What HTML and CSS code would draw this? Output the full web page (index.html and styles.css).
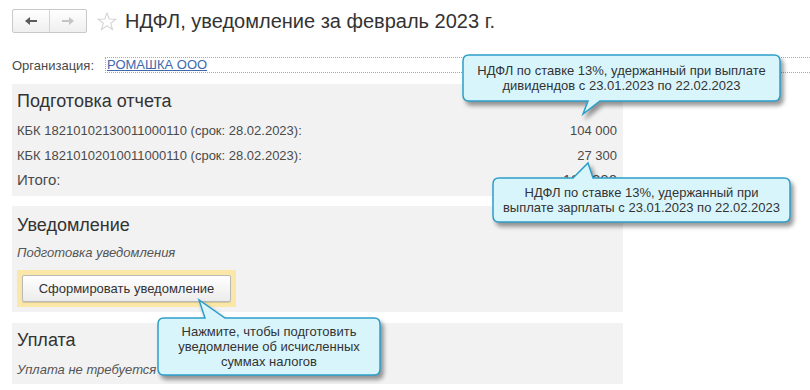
FILE: index.html
```html
<!DOCTYPE html>
<html lang="ru">
<head>
  <meta charset="UTF-8" />
  <title>НДФЛ, уведомление за февраль 2023 г.</title>
  <link rel="stylesheet" href="styles.css">
</head>
<body>

  <!-- HEADER -->
  <header class="top">
    <div class="nav">
      <span class="nav-btn">
        <svg width="12" height="8" viewBox="0 0 12 8"><path d="M0 4 L5 0 V3 H12 V5 H5 V8 Z" fill="#5a5a5a"/></svg>
      </span>
      <span class="nav-btn">
        <svg width="12" height="8" viewBox="0 0 12 8"><path d="M12 4 L7 0 V3 H0 V5 H7 V8 Z" fill="#c4c4c4"/></svg>
      </span>
    </div>
    <svg class="star" width="20" height="19" viewBox="0 0 19 18">
      <path d="M9.5 1 L11.7 6.6 L17.8 6.9 L13 10.7 L14.7 16.6 L9.5 13.2 L4.3 16.6 L6 10.7 L1.2 6.9 L7.3 6.6 Z" fill="none" stroke="#d2d2d2" stroke-width="1"/>
    </svg>
    <h1>НДФЛ, уведомление за февраль 2023 г.</h1>
  </header>

  <div class="org">
    <span class="org-label">Организация:</span>
    <div class="org-field"><a href="#">РОМАШКА ООО</a></div>
  </div>

  <!-- Подготовка отчета -->
  <section class="panel report">
    <h2>Подготовка отчета</h2>
    <div class="row"><span>КБК 18210102130011000110 (срок: 28.02.2023):</span><span>104 000</span></div>
    <div class="row"><span>КБК 18210102010011000110 (срок: 28.02.2023):</span><span>27 300</span></div>
    <div class="row total"><span>Итого:</span><span>131 300</span></div>
  </section>

  <!-- Уведомление -->
  <section class="panel notice">
    <h2>Уведомление</h2>
    <p class="note">Подготовка уведомления</p>
    <div class="highlight">
      <button class="btn">Сформировать уведомление</button>
    </div>
  </section>

  <!-- Уплата -->
  <section class="panel pay">
    <h2>Уплата</h2>
    <p class="note">Уплата не требуется</p>
  </section>

  <!-- callouts -->
  <div class="tip tip-div">
    <svg class="tip-shape" width="317" height="46">
      <path d="M6 0 H311 Q317 0 317 6 V40 Q317 46 311 46 H137 L120 59 L125 46 H6 Q0 46 0 40 V6 Q0 0 6 0 Z"/>
    </svg>
    <div class="tip-text">НДФЛ по ставке 13%, удержанный при выплате<br>дивидендов с 23.01.2023 по 22.02.2023</div>
  </div>

  <div class="tip tip-sal">
    <svg class="tip-shape" width="297" height="44">
      <path d="M6 0 H80 L95 -15 L100 0 H291 Q297 0 297 6 V38 Q297 44 291 44 H6 Q0 44 0 38 V6 Q0 0 6 0 Z"/>
    </svg>
    <div class="tip-text">НДФЛ по ставке 13%, удержанный при<br>выплате зарплаты с 23.01.2023 по 22.02.2023</div>
  </div>

  <div class="tip tip-btn">
    <svg class="tip-shape" width="222" height="57">
      <path d="M6 0 H47 L41 -18 L67 0 H216 Q222 0 222 6 V51 Q222 57 216 57 H6 Q0 57 0 51 V6 Q0 0 6 0 Z"/>
    </svg>
    <div class="tip-text">Нажмите, чтобы подготовить<br>уведомление об исчисленных<br>суммах налогов</div>
  </div>

</body>
</html>
```

FILE: styles.css
```css
body {
  font-family: 'Liberation Sans', Arial, sans-serif;
  margin: 0;
  padding: 0;
  background-color: #fff;
  color: #333;
  position: relative;
  width: 810px;
  height: 390px;
  overflow: hidden;
}

.top {
  display: flex;
  align-items: center;
  padding: 9px 12px 0;
  height: 24px;
}

.nav {
  display: flex;
  height: 22px;
  border: 1px solid #c9c9c9;
  border-radius: 2px;
  background: linear-gradient(#ffffff, #efefef);
}

.nav-btn {
  width: 36px;
  display: flex;
  align-items: center;
  justify-content: center;
}

.nav-btn + .nav-btn {
  border-left: 1px solid #d4d4d4;
}

.star {
  margin-left: 10px;
  margin-top: 1px;
}

.top h1 {
  margin: 0 0 0 8px;
  font-size: 20px;
  font-weight: normal;
  color: #333;
  line-height: 24px;
}

.org {
  display: flex;
  align-items: center;
  margin-top: 24px;
  padding-left: 12px;
  font-size: 13px;
}

.org-label {
  width: 93px;
  color: #4a4a4a;
}

.org-field {
  flex: 1;
  height: 14px;
  line-height: 14px;
  border: 1px dotted #a8a8a8;
  border-right: none;
  padding-left: 1px;
}

.org-field a {
  color: #3d68b0;
  text-decoration: underline;
}

.panel {
  background: #f2f2f2;
  margin-left: 12px;
  width: 600px;
  padding: 6px 6px 1px 5px;
}

.panel h2 {
  margin: 0;
  font-size: 18px;
  font-weight: normal;
  line-height: 22px;
  color: #333;
}

.report {
  margin-top: 11px;
  padding-bottom: 4px;
}

.report h2 {
  margin-bottom: 6px;
}

.row {
  display: flex;
  justify-content: space-between;
  font-size: 13px;
  line-height: 25px;
  color: #4a4a4a;
}

.row.total {
  font-size: 15px;
  line-height: 24px;
}

.note {
  margin: 7px 0 0;
  font-size: 13px;
  font-style: italic;
  line-height: 20px;
  color: #555;
}

.notice {
  margin-top: 10px;
  padding-top: 8px;
  padding-bottom: 5px;
}

.highlight {
  margin-top: 7px;
  width: 209px;
  padding: 5px;
  background: #fbe8a9;
}

.btn {
  display: block;
  width: 209px;
  height: 27px;
  font-family: 'Liberation Sans', Arial, sans-serif;
  font-size: 13px;
  color: #333;
  border: 1px solid #b9b9b9;
  border-radius: 2px;
  background: linear-gradient(#ffffff, #ececec);
  box-shadow: 0 1px 1px rgba(0, 0, 0, 0.15);
  padding: 0;
}

.pay {
  margin-top: 11px;
  height: 54px;
  padding-top: 6px;
}

.pay .note {
  margin-top: 9px;
}

/* callouts */
.tip {
  position: absolute;
}

.tip-shape {
  position: absolute;
  left: 0;
  top: 0;
  overflow: visible;
  filter: drop-shadow(3px 4px 2px rgba(0, 0, 0, 0.4));
}

.tip-shape path {
  fill: #d9f5fc;
  stroke: #2c9fc9;
  stroke-width: 1.5;
}

.tip-text {
  position: relative;
  display: flex;
  align-items: center;
  justify-content: center;
  height: 100%;
  text-align: center;
  font-size: 13px;
  line-height: 15px;
  color: #333;
}

.tip-div {
  left: 463px;
  top: 55px;
  width: 317px;
  height: 46px;
}

.tip-sal {
  left: 493px;
  top: 178px;
  width: 297px;
  height: 44px;
}

.tip-btn {
  left: 158px;
  top: 318px;
  width: 222px;
  height: 57px;
}
```
